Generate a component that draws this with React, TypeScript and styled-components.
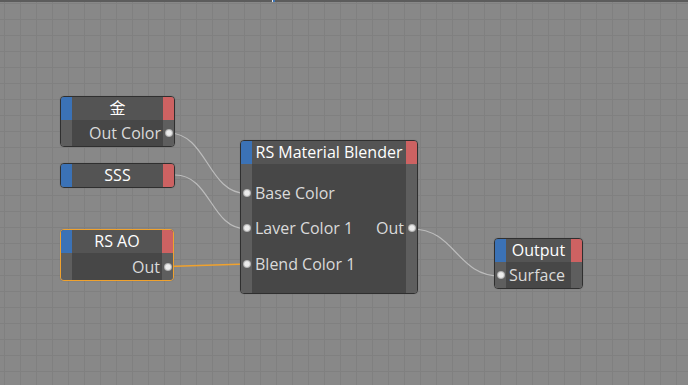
import styled, { createGlobalStyle } from "styled-components";

const GlobalStyle = createGlobalStyle`
  * { box-sizing: border-box; }
  html, body { margin: 0; padding: 0; }
  body {
    background: #888888;
    font-family: "Open Sans", "Noto Sans", "Noto Sans CJK SC", sans-serif;
  }
`;

const RAIL = 11;
const TOP = 2;

const Page = styled.div`
  width: 688px;
  height: 385px;
  display: flex;
  flex-direction: column;
  overflow: hidden;
`;

const TopBar = styled.div`
  height: ${TOP}px;
  background: #5c5c5c;
  display: flex;
  padding-left: 272px;
`;

const TopMark = styled.span`
  width: 3px;
  height: 2px;
  background: linear-gradient(to right, #e8e8e8 0 50%, #3b74b8 50%);
`;

const Canvas = styled.div`
  flex: 1;
  position: relative;
  background-color: #888888;
  background-image:
    linear-gradient(to right, #808080 1px, transparent 1px),
    linear-gradient(to bottom, #808080 1px, transparent 1px);
  background-size: 16px 16px;
  background-position: 4px 1px;
`;

const Wires = styled.svg`
  position: absolute;
  inset: 0;
  width: 100%;
  height: 100%;
  pointer-events: none;
`;

const NodeBox = styled.div<{ $x: number; $y: number; $w: number; $selected?: boolean }>`
  position: absolute;
  left: ${(p) => p.$x}px;
  top: ${(p) => p.$y - TOP}px;
  width: ${(p) => p.$w}px;
  border: 1px solid ${(p) => (p.$selected ? "#f0a22e" : "#2f2f2f")};
  border-radius: 4px;
  overflow: hidden;
  display: flex;
  flex-direction: column;
  box-shadow: 0 0 1px rgba(0, 0, 0, 0.25);
`;

const Header = styled.div`
  height: 23px;
  display: grid;
  grid-template-columns: ${RAIL}px 1fr ${RAIL}px;
  background: #545454;
`;

const BlueTab = styled.span`
  background: #3b72b6;
`;

const RedTab = styled.span`
  background: #cd6262;
`;

const Title = styled.span`
  color: #ffffff;
  font-size: 16px;
  line-height: 23px;
  text-align: center;
  white-space: nowrap;
  overflow: visible;
  display: flex;
  justify-content: center;
`;

const Body = styled.div<{ $top?: number; $bottom?: number }>`
  padding: ${(p) => p.$top ?? 0}px 0 ${(p) => p.$bottom ?? 0}px;
  background: linear-gradient(
    to right,
    #5e5e5e 0 ${RAIL}px,
    #474747 ${RAIL}px calc(100% - ${RAIL}px),
    #5e5e5e calc(100% - ${RAIL}px)
  );
`;

const Row = styled.div<{ $h: number }>`
  height: ${(p) => p.$h}px;
  display: grid;
  grid-template-columns: ${RAIL}px 1fr auto ${RAIL}px;
  align-items: center;
`;

const PortCell = styled.span`
  display: flex;
  align-items: center;
  justify-content: center;
`;

const Port = styled.span`
  width: 8px;
  height: 8px;
  border-radius: 50%;
  background: radial-gradient(circle, #ececec 0 40%, #b4b4b4 62%, #7c7c7c 100%);
`;

const Label = styled.span<{ $right?: boolean }>`
  color: #dadada;
  font-size: 16px;
  white-space: nowrap;
  text-align: ${(p) => (p.$right ? "right" : "left")};
  padding: ${(p) => (p.$right ? "0 2px 0 0" : "0 0 0 3px")};
`;

const curve = (x1: number, y1: number, x2: number, y2: number) => {
  const dx = (x2 - x1) / 2;
  const a = y1 - TOP;
  const b = y2 - TOP;
  return `M${x1} ${a} C${x1 + dx} ${a}, ${x2 - dx} ${b}, ${x2} ${b}`;
};

const inputs = ["Base Color", "Laver Color 1", "Blend Color 1"];

export default function App() {
  return (
    <Page>
      <GlobalStyle />
      <TopBar>
        <TopMark />
      </TopBar>
      <Canvas>
        <Wires>
          <path d={curve(168.5, 133, 246.5, 193.5)} stroke="#bcbcbc" strokeWidth={1.2} fill="none" />
          <path d={curve(175, 175, 246.5, 229)} stroke="#bcbcbc" strokeWidth={1.2} fill="none" />
          <path d={`M167.5 ${266.5 - TOP} L246.5 ${264 - TOP}`} stroke="#f0a22e" strokeWidth={1.3} fill="none" />
          <path d={curve(411.5, 229, 500.5, 276)} stroke="#bcbcbc" strokeWidth={1.2} fill="none" />
        </Wires>

        <NodeBox $x={60} $y={96} $w={115}>
          <Header>
            <BlueTab />
            <Title>金</Title>
            <RedTab />
          </Header>
          <Body>
            <Row $h={26}>
              <PortCell />
              <Label $right>Out Color</Label>
              <span />
              <PortCell>
                <Port />
              </PortCell>
            </Row>
          </Body>
        </NodeBox>

        <NodeBox $x={60} $y={163} $w={115}>
          <Header>
            <BlueTab />
            <Title>SSS</Title>
            <RedTab />
          </Header>
        </NodeBox>

        <NodeBox $x={60} $y={229} $w={114} $selected>
          <Header>
            <BlueTab />
            <Title>RS AO</Title>
            <RedTab />
          </Header>
          <Body>
            <Row $h={27}>
              <PortCell />
              <Label $right>Out</Label>
              <span />
              <PortCell>
                <Port />
              </PortCell>
            </Row>
          </Body>
        </NodeBox>

        <NodeBox $x={240} $y={140} $w={178}>
          <Header>
            <BlueTab />
            <Title>RS Material Blender</Title>
            <RedTab />
          </Header>
          <Body $top={11} $bottom={12}>
            {inputs.map((label, i) => (
              <Row key={label} $h={i === 1 ? 36 : 35}>
                <PortCell>
                  <Port />
                </PortCell>
                <Label>{label}</Label>
                {i === 1 ? <Label $right>Out</Label> : <span />}
                <PortCell>{i === 1 && <Port />}</PortCell>
              </Row>
            ))}
          </Body>
        </NodeBox>

        <NodeBox $x={494} $y={238} $w={89}>
          <Header>
            <BlueTab />
            <Title>Output</Title>
            <RedTab />
          </Header>
          <Body>
            <Row $h={26}>
              <PortCell>
                <Port />
              </PortCell>
              <Label>Surface</Label>
              <span />
              <PortCell />
            </Row>
          </Body>
        </NodeBox>
      </Canvas>
    </Page>
  );
}
